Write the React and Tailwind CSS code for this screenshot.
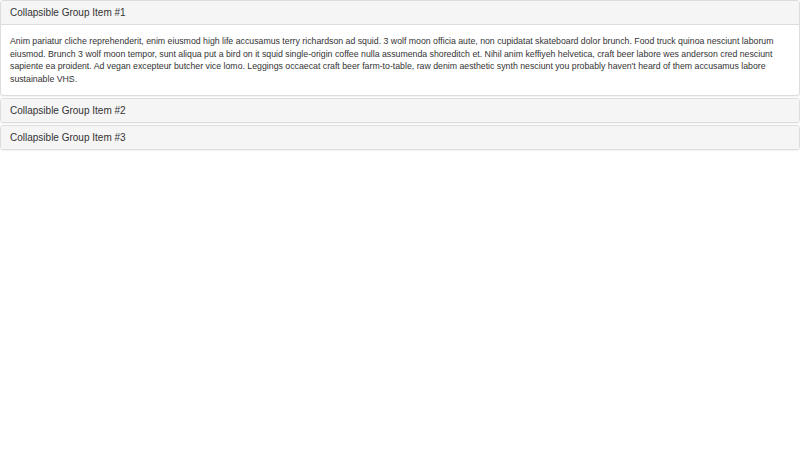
import React from "react";

const items = [
  {
    title: "Collapsible Group Item #1",
    open: true,
    body:
      "Anim pariatur cliche reprehenderit, enim eiusmod high life accusamus terry richardson ad squid. 3 wolf moon officia aute, non cupidatat skateboard dolor brunch. Food truck quinoa nesciunt laborum eiusmod. Brunch 3 wolf moon tempor, sunt aliqua put a bird on it squid single-origin coffee nulla assumenda shoreditch et. Nihil anim keffiyeh helvetica, craft beer labore wes anderson cred nesciunt sapiente ea proident. Ad vegan excepteur butcher vice lomo. Leggings occaecat craft beer farm-to-table, raw denim aesthetic synth nesciunt you probably haven't heard of them accusamus labore sustainable VHS.",
  },
  { title: "Collapsible Group Item #2" },
  { title: "Collapsible Group Item #3" },
];

export default function App() {
  return (
    <div className="w-[800px] h-[450px] bg-white text-[#333] font-['Liberation_Sans',Arial,sans-serif]">
      <div className="flex flex-col gap-[2px]">
        {items.map((item) => (
          <div
            key={item.title}
            className="border border-[#ddd] rounded-[3px] bg-white shadow-[0_1px_1px_rgba(0,0,0,0.05)]"
          >
            <div className="bg-[#f5f5f5] px-[9px] py-[6px] rounded-t-[2px]">
              <h4 className="text-[10px] leading-[11px] text-[#333]">{item.title}</h4>
            </div>
            {item.open && (
              <div className="border-t border-[#ddd] px-[9px] py-[10px] text-[8.75px] leading-[12.5px]">
                {item.body}
              </div>
            )}
          </div>
        ))}
      </div>
    </div>
  );
}
